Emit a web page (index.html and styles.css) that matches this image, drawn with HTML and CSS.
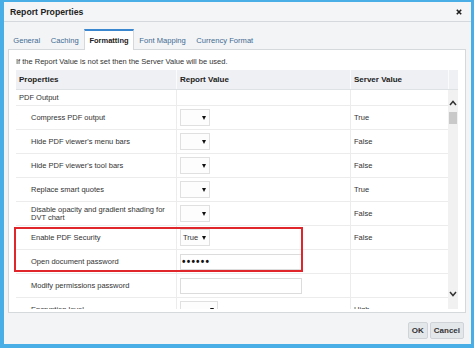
FILE: index.html
```html
<html lang="en">
<head>
    <meta charset="UTF-8">
    <meta name="viewport" content="width=device-width, initial-scale=1.0">
    <title>Report Properties</title>
    <link rel="stylesheet" href="styles.css">
</head>
<body>
    <div class="dialog">
        <div class="titlebar">
            <span class="title">Report Properties</span>
            <svg class="close" width="6" height="6" viewBox="0 0 6 6">
                <path d="M0.8 0.8 L5.2 5.2 M5.2 0.8 L0.8 5.2" stroke="#1e1e1e" stroke-width="1.6"/>
            </svg>
        </div>

        <div class="tabs">
            <div class="tab">General</div>
            <div class="tab">Caching</div>
            <div class="tab active">Formatting</div>
            <div class="tab">Font Mapping</div>
            <div class="tab">Currency Format</div>
        </div>

        <div class="panel">
            <p class="note">If the Report Value is not set then the Server Value will be used.</p>
            <div class="table">
                <div class="thead">
                    <div class="th">Properties</div>
                    <div class="th">Report Value</div>
                    <div class="th">Server Value</div>
                    <div class="th"></div>
                </div>
                <div class="tbody">
                    <div class="rows">
                        <div class="row group">
                            <div class="cell">PDF Output</div>
                            <div class="cell"></div>
                            <div class="cell"></div>
                        </div>
                        <div class="row">
                            <div class="cell">Compress PDF output</div>
                            <div class="cell"><div class="select"><span></span><i class="arrow"></i></div></div>
                            <div class="cell">True</div>
                        </div>
                        <div class="row">
                            <div class="cell">Hide PDF viewer's menu bars</div>
                            <div class="cell"><div class="select"><span></span><i class="arrow"></i></div></div>
                            <div class="cell">False</div>
                        </div>
                        <div class="row">
                            <div class="cell">Hide PDF viewer's tool bars</div>
                            <div class="cell"><div class="select"><span></span><i class="arrow"></i></div></div>
                            <div class="cell">False</div>
                        </div>
                        <div class="row">
                            <div class="cell">Replace smart quotes</div>
                            <div class="cell"><div class="select"><span></span><i class="arrow"></i></div></div>
                            <div class="cell">True</div>
                        </div>
                        <div class="row">
                            <div class="cell wrap">Disable opacity and gradient shading for<br>DVT chart</div>
                            <div class="cell"><div class="select"><span></span><i class="arrow"></i></div></div>
                            <div class="cell">False</div>
                        </div>
                        <div class="row">
                            <div class="cell">Enable PDF Security</div>
                            <div class="cell"><div class="select"><span>True</span><i class="arrow"></i></div></div>
                            <div class="cell">False</div>
                        </div>
                        <div class="row">
                            <div class="cell">Open document password</div>
                            <div class="cell"><div class="input password">&bull;&bull;&bull;&bull;&bull;&bull;</div></div>
                            <div class="cell"></div>
                        </div>
                        <div class="row">
                            <div class="cell">Modify permissions password</div>
                            <div class="cell"><div class="input"></div></div>
                            <div class="cell"></div>
                        </div>
                        <div class="row">
                            <div class="cell">Encryption level</div>
                            <div class="cell"><div class="select wide"><span></span><i class="arrow"></i></div></div>
                            <div class="cell">High</div>
                        </div>
                    </div>
                    <div class="scrollbar">
                        <svg width="8" height="6" viewBox="0 0 8 6">
                            <polyline points="1,5 4,1.5 7,5" fill="none" stroke="#333" stroke-width="1.5"/>
                        </svg>
                        <div class="thumb"></div>
                        <svg class="down" width="8" height="6" viewBox="0 0 8 6">
                            <polyline points="1,1 4,4.5 7,1" fill="none" stroke="#333" stroke-width="1.5"/>
                        </svg>
                    </div>
                </div>
                <div class="highlight"></div>
            </div>
        </div>

        <div class="footer">
            <button type="button" class="btn">OK</button>
            <button type="button" class="btn">Cancel</button>
        </div>
    </div>
</body>
</html>
```

FILE: styles.css
```css
body {
    margin: 0;
    font-family: "Liberation Sans", Arial, sans-serif;
    color: #333;
}
.dialog {
    width: 474px;
    height: 348px;
    box-sizing: border-box;
    border-style: solid;
    border-color: #4aaee6;
    border-width: 2px 3px 4px 4px;
    background: #f3f4f6;
    display: flex;
    flex-direction: column;
}
.titlebar {
    height: 19px;
    border-bottom: 1px solid #d5d9dd;
    display: flex;
    align-items: center;
    justify-content: space-between;
    padding: 0 9px 0 6px;
    background: #f4f5f7;
}
.title {
    font-weight: bold;
    font-size: 8.7px;
    color: #222;
}
.tabs {
    display: flex;
    margin-top: 7px;
    padding-left: 4px;
    height: 20px;
    position: relative;
    z-index: 1;
}
.tab {
    padding: 0 5.25px;
    line-height: 19px;
    border-top: 2px solid transparent;
    font-size: 7.6px;
    color: #3f6b93;
}
.tab.active {
    background: #fff;
    border-top-color: #3a87cf;
    border-left: 1px solid #d6d9dc;
    border-right: 1px solid #d6d9dc;
    padding: 0 4.5px;
    height: 19px;
    font-weight: bold;
    font-size: 7.5px;
    color: #222;
}
.panel {
    margin: 0 5px 0 4px;
    height: 264px;
    box-sizing: border-box;
    border: 1px solid #d6d9dc;
    background: #fff;
    padding: 7px 0 0 7px;
}
.note {
    margin: 0;
    font-size: 7.5px;
    line-height: 10px;
}
.table {
    margin-top: 3px;
    width: 442px;
    position: relative;
}
.thead {
    display: grid;
    grid-template-columns: 160px 174px 98px 10px;
    height: 19px;
    border-bottom: 1px solid #dfe2e5;
    background: #eef0f3;
}
.th {
    font-weight: bold;
    font-size: 8px;
    color: #222;
    padding-left: 3px;
    line-height: 19px;
}
.th + .th {
    border-left: 1px solid #fafbfc;
}
.tbody {
    display: flex;
    height: 219px;
    overflow: hidden;
}
.rows {
    width: 432px;
}
.row {
    display: grid;
    grid-template-columns: 160px 174px 98px;
    height: 24px;
    box-sizing: border-box;
    border-bottom: 1px solid #ececec;
    font-size: 7.5px;
}
.row.group {
    height: 16px;
}
.cell {
    display: flex;
    align-items: center;
    padding-left: 3px;
}
.cell + .cell {
    border-left: 1px solid #ececec;
}
.row .cell:first-child {
    padding-left: 15px;
}
.row.group .cell:first-child {
    padding-left: 3px;
}
.cell.wrap {
    line-height: 8px;
}
.select {
    width: 30px;
    height: 17px;
    box-sizing: border-box;
    border: 1px solid #e0e0e0;
    background: #fdfdfd;
    display: flex;
    align-items: center;
    justify-content: space-between;
    padding: 0 3px 0 2px;
}
.select.wide {
    width: 38px;
}
.arrow {
    width: 0;
    height: 0;
    border-left: 2.5px solid transparent;
    border-right: 2.5px solid transparent;
    border-top: 4px solid #111;
}
.input {
    width: 122px;
    height: 16px;
    box-sizing: border-box;
    border: 1px solid #dcdcdc;
    background: #fff;
}
.input.password {
    font-size: 10px;
    font-weight: bold;
    letter-spacing: 1.2px;
    line-height: 14px;
    padding-left: 1px;
    color: #111;
}
.scrollbar {
    width: 10px;
    background: #f1f1f1;
    display: flex;
    flex-direction: column;
    align-items: center;
    padding: 10px 0 12px;
    box-sizing: border-box;
}
.thumb {
    width: 8px;
    height: 12px;
    margin-top: 6px;
    background: #c9c9c9;
}
.scrollbar .down {
    margin-top: auto;
}
.highlight {
    position: absolute;
    left: -2px;
    top: 157px;
    width: 289px;
    height: 45px;
    box-sizing: border-box;
    border: 2px solid #e0262b;
}
.footer {
    flex: 1;
    display: flex;
    justify-content: flex-end;
    align-items: center;
    gap: 2px;
    padding: 3px 7px 0 0;
}
.btn {
    height: 17px;
    padding: 0 3px;
    font-family: "Liberation Sans", Arial, sans-serif;
    font-weight: bold;
    font-size: 8px;
    color: #333;
    background: #e4e7ea;
    border: 1px solid #d0d4d8;
    border-radius: 2px;
}
```
